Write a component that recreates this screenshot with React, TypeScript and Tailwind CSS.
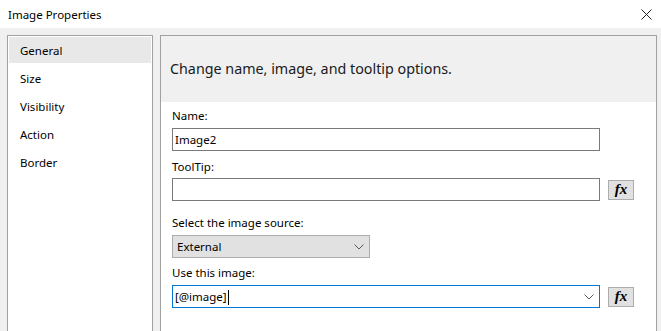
import React from "react";

const font = { fontFamily: '"Segoe UI", "Noto Sans", Arial, sans-serif' };

function Chevron() {
  return (
    <svg width="10" height="6" viewBox="0 0 10 6" className="shrink-0">
      <path d="M0.5 0.5 L5 5 L9.5 0.5" fill="none" stroke="#5a5a5a" strokeWidth="1" />
    </svg>
  );
}

function FxButton() {
  return (
    <div className="w-[26px] h-[20px] ml-[8px] bg-[#e1e1e1] border border-[#adadad] flex items-center justify-center">
      <span className="text-[15px] font-bold italic leading-none text-black" style={{ fontFamily: '"Liberation Serif", serif' }}>
        fx
      </span>
    </div>
  );
}

export default function App() {
  const items = ["General", "Size", "Visibility", "Action", "Border"];
  return (
    <div className="w-[661px] h-[331px] bg-[#f0f0f0] flex flex-col overflow-hidden text-[11.5px] text-black" style={font}>
      <div className="h-[28px] bg-white flex items-center justify-between pl-[8px] pr-[5px] shrink-0">
        <span className="text-[11.5px] leading-none pt-[1px]">Image Properties</span>
        <svg width="11" height="11" viewBox="0 0 11 11" className="mr-[4px]">
          <path d="M0.5 0.5 L10.5 10.5 M10.5 0.5 L0.5 10.5" stroke="#222" strokeWidth="1" />
        </svg>
      </div>
      <div className="flex flex-1 pt-[7px] pl-[7px] gap-[7px]">
        <div className="w-[146px] bg-white border-l border-t border-r border-[#a0a0a0] p-[1px] pb-0">
          {items.map((it, i) => (
            <div
              key={it}
              className={`h-[26px] mb-[2px] pl-[11px] pt-[1px] flex items-center ${i === 0 ? "bg-[#e8e8e8]" : ""}`}
            >
              {it}
            </div>
          ))}
        </div>
        <div className="w-[497px] bg-white border-l border-t border-r border-[#a0a0a0] flex flex-col">
          <div className="h-[66px] bg-[#f0f0f0] flex items-center pl-[9px] pt-[1px] shrink-0">
            <span className="text-[14.3px] leading-none text-[#1a1a1a]">Change name, image, and tooltip options.</span>
          </div>
          <div className="pl-[11px] pt-[3px] flex flex-col">
            <div className="h-[20px] pt-[1px] flex items-center">Name:</div>
            <div className="mt-[3px] w-[428px] h-[23px] border border-[#7a7a7a] flex items-center pl-[2px] pt-[1px]">Image2</div>
            <div className="mt-[5px] h-[20px] pt-[1px] flex items-center">ToolTip:</div>
            <div className="mt-[2px] flex items-center">
              <div className="w-[428px] h-[23px] border border-[#7a7a7a]" />
              <FxButton />
            </div>
            <div className="mt-[11px] h-[20px] pt-[1px] flex items-center">Select the image source:</div>
            <div className="mt-[3px] w-[198px] h-[23px] bg-[#e1e1e1] border border-[#adadad] flex items-center justify-between pl-[4px] pr-[5px]">
              <span className="pt-[1px]">External</span>
              <Chevron />
            </div>
            <div className="mt-[4px] h-[20px] pt-[1px] flex items-center">Use this image:</div>
            <div className="mt-[3px] flex items-center">
              <div className="w-[428px] h-[23px] border border-[#0078d7] flex items-center justify-between pl-[2px] pr-[5px]">
                <span className="flex items-center pt-[1px]">
                  [@image]
                  <span className="inline-block w-[1px] h-[15px] bg-black ml-[1px]" />
                </span>
                <Chevron />
              </div>
              <FxButton />
            </div>
          </div>
        </div>
      </div>
    </div>
  );
}
